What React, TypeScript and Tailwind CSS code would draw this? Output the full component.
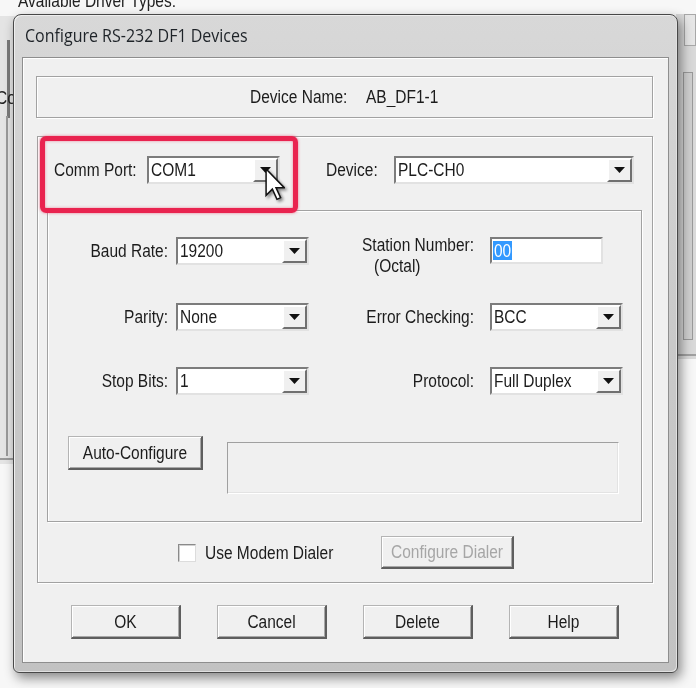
import React from "react";

const T = ({ children, className = "" }: { children: React.ReactNode; className?: string }) => (
  <span className={`inline-block scale-y-[1.22] ${className}`}>{children}</span>
);

const Arrow = () => (
  <svg width="11" height="6" viewBox="0 0 11 6" className="block">
    <polygon points="0,0 11,0 5.5,6" fill="#111" />
  </svg>
);

function Combo({ value, className }: { value: string; className: string }) {
  return (
    <div
      className={`flex h-[28px] border-2 border-t-[#7c7c7c] border-l-[#7c7c7c] border-b-[#e2e2e2] border-r-[#e2e2e2] bg-white ${className}`}
    >
      <div className="flex flex-1 items-center pl-[2px] text-[15.5px] text-[#1c1c1c]">
        <T>{value}</T>
      </div>
      <div className="flex w-[25px] items-center justify-center border-2 border-t-white border-l-white border-b-[#707070] border-r-[#707070] bg-[#f0f0f0]">
        <Arrow />
      </div>
    </div>
  );
}

function Btn({ label, className, disabled = false }: { label: string; className: string; disabled?: boolean }) {
  return (
    <div
      className={`flex items-center justify-center border-t border-l border-t-[#b4b4b4] border-l-[#b4b4b4] border-b-2 border-r-2 border-b-[#5e5e5e] border-r-[#5e5e5e] bg-[#f0f0f0] shadow-[inset_1px_1px_0_#ffffff,inset_-1px_-1px_0_#a8a8a8] text-[15.5px] ${
        disabled ? "text-[#a6a6a6]" : "text-[#1c1c1c]"
      } ${className}`}
    >
      <T>{label}</T>
    </div>
  );
}

const etched = "border border-[#a2a2a2] shadow-[inset_1px_1px_0_#ffffff,1px_1px_0_#ffffff]";

function Cursor() {
  return (
    <svg
      width="20"
      height="33"
      viewBox="0 0 12 20"
      className="absolute left-[265px] top-[168px] drop-shadow-[2px_2px_1.5px_rgba(0,0,0,0.45)]"
    >
      <path
        d="M0.6 0.6 L0.6 16.6 L4.4 12.8 L7.2 19 L9.4 18 L6.6 11.9 L11.6 11.9 Z"
        fill="#ffffff"
        stroke="#111"
        strokeWidth="0.9"
        strokeLinejoin="miter"
      />
    </svg>
  );
}

export default function App() {
  return (
    <div
      className="relative h-[688px] w-[696px] overflow-hidden bg-[#f7f7f7]"
      style={{ fontFamily: '"Liberation Sans", Arial, sans-serif' }}
    >
      {/* background: top strip text */}
      <div className="absolute left-[18px] top-[-11px] text-[15.5px] text-[#222]">
        <T>Available Driver Types:</T>
      </div>

      {/* background window on left */}
      <div className="absolute left-0 top-[16px] h-[448px] w-[16px] bg-[#e4e4e4]">
        <div className="absolute left-[7px] top-[24px] h-[78px] w-[3px] bg-[#7a7a7a]" />
        <div className="absolute left-[-4px] top-[70px] text-[15.5px] text-[#222]">
          <T>Co</T>
        </div>
        <div className="absolute left-[6px] top-[100px] h-[340px] w-[2px] bg-[#9a9a9a]" />
        <div className="absolute left-0 top-[442px] h-[2px] w-[16px] bg-[#9a9a9a]" />
      </div>

      {/* background window on right */}
      <div className="absolute left-[676px] top-[14px] h-[345px] w-[20px] bg-[#d9d9d9]">
        <div className="absolute left-[8px] top-[0px] h-[32px] w-[12px] border border-[#a8a8a8] bg-[#e6e6e6]" />
        <div className="absolute left-[7px] top-[58px] h-[268px] w-[10px] border border-[#9a9a9a] bg-[#cfcfcf]" />
        <div className="absolute left-0 top-[340px] h-[2px] w-[20px] bg-[#a0a0a0]" />
      </div>

      {/* dialog window */}
      <div className="absolute left-[13px] top-[14px] flex h-[659px] w-[665px] flex-col rounded-t-[8px] rounded-b-[6px] border border-[#484848] bg-gradient-to-b from-[#d8d8d8] via-[#c9c9c9] to-[#c2c2c2] shadow-[3px_5px_12px_rgba(0,0,0,0.45),inset_1px_1px_0_#eeeeee,inset_-1px_-1px_0_#e0e0e0]">
        {/* title bar */}
        <div className="flex h-[42px] items-center pl-[11px] pb-[2px]">
          <span
            className="inline-block scale-y-[1.12] text-[16px] text-[#1e2328]"
            style={{ fontFamily: '"Open Sans", "Noto Sans", sans-serif' }}
          >
            Configure RS-232 DF1 Devices
          </span>
        </div>

        {/* client area */}
        <div className="mx-[8px] mb-[9px] flex flex-1 flex-col border border-[#8e8e8e] bg-[#f0f0f0] pl-[13px] pr-[15px] shadow-[inset_1px_1px_0_#ffffff]">
          {/* device name */}
          <div className={`mt-[18px] flex h-[42px] items-center pl-[213px] text-[15.5px] text-[#1c1c1c] ${etched}`}>
            <div className="w-[116px]">
              <T>Device Name:</T>
            </div>
            <T>AB_DF1-1</T>
          </div>

          {/* outer group */}
          <div className={`ml-[1px] mt-[18px] flex h-[447px] flex-col ${etched}`}>
            <div className="flex h-[28px] mt-[19px] items-center pl-[16px] text-[15.5px] text-[#1c1c1c]">
              <div className="w-[93px]">
                <T>Comm Port:</T>
              </div>
              <Combo value="COM1" className="w-[133px]" />
              <div className="w-[114px] pl-[46px]">
                <T>Device:</T>
              </div>
              <Combo value="PLC-CH0" className="w-[240px]" />
            </div>

            {/* inner group */}
            <div className={`ml-[9px] mt-[26px] flex h-[312px] w-[595px] flex-col ${etched} text-[15.5px] text-[#1c1c1c]`}>
              {/* row 1 */}
              <div className="mt-[26px] flex h-[28px] items-start">
                <div className="flex h-[28px] w-[120px] items-center justify-end">
                  <T>Baud Rate:</T>
                </div>
                <Combo value="19200" className="ml-[8px] w-[133px]" />
                <div className="-mt-[3px] flex w-[165px] flex-col leading-[21px]">
                  <div className="text-right">
                    <T>Station Number:</T>
                  </div>
                  <div className="pl-[65px]">
                    <T>(Octal)</T>
                  </div>
                </div>
                <div className="ml-[16px] flex h-[27px] w-[113px] items-center border-2 border-t-[#7c7c7c] border-l-[#7c7c7c] border-b-[#e2e2e2] border-r-[#e2e2e2] bg-white pl-[1px]">
                  <span className="bg-[#3399ff] px-[1px] leading-[19px] text-white">
                    <T>00</T>
                  </span>
                </div>
              </div>

              {/* row 2 */}
              <div className="mt-[38px] flex items-center">
                <div className="w-[120px] text-right">
                  <T>Parity:</T>
                </div>
                <Combo value="None" className="ml-[8px] w-[133px]" />
                <div className="w-[165px] text-right">
                  <T>Error Checking:</T>
                </div>
                <Combo value="BCC" className="ml-[16px] w-[133px]" />
              </div>

              {/* row 3 */}
              <div className="mt-[36px] flex items-center">
                <div className="w-[120px] text-right">
                  <T>Stop Bits:</T>
                </div>
                <Combo value="1" className="ml-[8px] w-[133px]" />
                <div className="w-[165px] text-right">
                  <T>Protocol:</T>
                </div>
                <Combo value="Full Duplex" className="ml-[16px] w-[133px]" />
              </div>

              {/* auto configure */}
              <div className="mt-[41px] flex items-start">
                <Btn label="Auto-Configure" className="ml-[20px] h-[34px] w-[135px]" />
                <div className="ml-[24px] mt-[6px] h-[52px] w-[392px] border border-t-[#a0a0a0] border-l-[#a0a0a0] border-b-white border-r-white shadow-[inset_-1px_-1px_0_#e3e3e3]" />
              </div>
            </div>

            {/* modem dialer */}
            <div className="mt-[14px] flex h-[33px] items-center text-[15.5px] text-[#1c1c1c]">
              <div className="ml-[140px] h-[18px] w-[18px] border border-t-[#8a8a8a] border-l-[#8a8a8a] border-b-[#dcdcdc] border-r-[#dcdcdc] bg-white shadow-[inset_1px_1px_0_#d0d0d0]" />
              <div className="ml-[9px] w-[176px]">
                <T>Use Modem Dialer</T>
              </div>
              <Btn label="Configure Dialer" disabled className="h-[33px] w-[133px]" />
            </div>
          </div>

          {/* bottom buttons */}
          <div className="mt-[22px] flex gap-[36px] pl-[35px]">
            <Btn label="OK" className="h-[34px] w-[110px]" />
            <Btn label="Cancel" className="h-[34px] w-[110px]" />
            <Btn label="Delete" className="h-[34px] w-[110px]" />
            <Btn label="Help" className="h-[34px] w-[110px]" />
          </div>
        </div>
      </div>

      {/* red highlight */}
      <div className="absolute left-[40px] top-[136px] h-[77px] w-[258px] rounded-[6px] border-[5px] border-[#e9234f] shadow-[0_0_3px_rgba(233,35,79,0.6),inset_0_0_3px_rgba(233,35,79,0.5)]" />

      <Cursor />
    </div>
  );
}
